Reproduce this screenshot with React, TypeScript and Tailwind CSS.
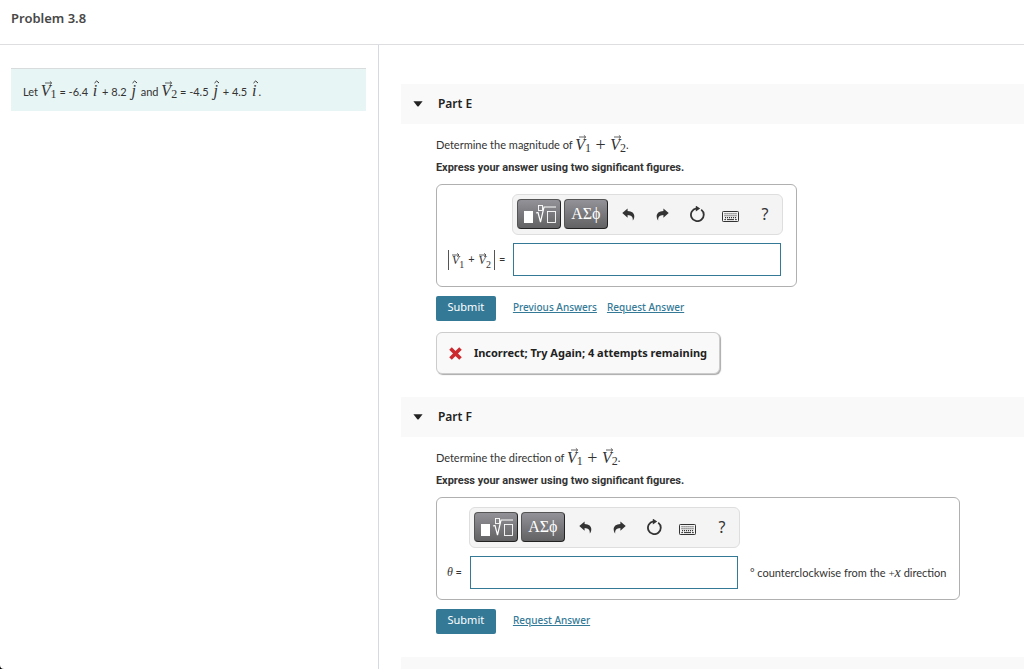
import React, { useState } from 'react';

type VecProps = {
  sub: string;
  small?: boolean;
};

// Italic V with an arrow over it and a subscript
function Vec({ sub, small = false }: VecProps) {
  return (
    <span className={`font-['Liberation_Serif',serif] leading-none ${small ? 'text-xs' : 'text-base'}`}>
      <span className="relative inline-block italic">
        V
        <svg
          className={`absolute h-1 overflow-visible ${small ? '-top-px left-0 w-full' : '-top-[2px] left-1 w-[7px]'}`}
          viewBox="0 0 10 4"
          preserveAspectRatio="none"
          fill="none"
          stroke="currentColor"
          strokeWidth="0.9"
        >
          <path d="M0 2H9.5M7 0.3L9.5 2L7 3.7" />
        </svg>
      </span>
      {small ? (
        <sub className="relative bottom-auto top-1 align-baseline text-[10px]">{sub}</sub>
      ) : (
        <sub className="relative bottom-auto top-[2px] align-baseline text-xs">{sub}</sub>
      )}
    </span>
  );
}

// Unit vector: italic letter with a hat
function Hat({ letter }: { letter: string }) {
  return (
    <span className="relative inline-block px-[2px] font-['Liberation_Serif',serif] text-base italic leading-none">
      {letter}
      <svg
        className="absolute left-[3px] top-0 h-[3px] w-[5px] overflow-visible"
        viewBox="0 0 5 3"
        fill="none"
        stroke="currentColor"
      >
        <path d="M0.5 0L2.7 -2L5 0" />
      </svg>
    </span>
  );
}

function UndoIcon() {
  return (
    <svg className="h-[13px] w-[13px]" viewBox="0 0 13 13" fill="currentColor">
      <path d="M0.3 5L5.6 0.4V3C9.8 3.2 12.6 5.2 12.3 8.8C12.2 10.3 11.7 11.4 10.8 12.6C11.1 9 9.6 7 5.6 6.9V9.7Z" />
    </svg>
  );
}

function RedoIcon() {
  return (
    <svg className="h-[13px] w-[13px]" viewBox="0 0 13 13" fill="currentColor">
      <path d="M12.7 5L7.4 0.4V3C3.2 3.2 0.4 5.2 0.7 8.8C0.8 10.3 1.3 11.4 2.2 12.6C1.9 9 3.4 7 7.4 6.9V9.7Z" />
    </svg>
  );
}

function ResetIcon() {
  return (
    <svg className="h-4 w-4" viewBox="0 0 16 16" fill="none">
      <path d="M12.2 3.6A6.4 6.4 0 1 1 7.4 2.4" stroke="currentColor" strokeWidth="1.8" />
      <path d="M6.8 -0.4L11.2 2.6L6.8 5.6Z" fill="currentColor" />
    </svg>
  );
}

function KeyboardIcon() {
  return (
    <svg className="mt-1 h-[11px] w-[17px]" viewBox="0 0 17 11" fill="none" stroke="currentColor">
      <rect x="0.5" y="0.5" width="16" height="10" rx="0.8" />
      <path d="M2.5 2.8H15M2.5 4.8H15M3 6.6H14.5" strokeDasharray="1.1 0.9" strokeWidth="1.1" />
      <path d="M2.3 8.6H4M5 8.6H12M13 8.6H14.8" />
    </svg>
  );
}

function RootIcon() {
  return (
    <svg className="h-[22px] w-[34px]" viewBox="0 0 34 22" fill="none" stroke="white">
      <rect x="2" y="8" width="9" height="12" fill="white" stroke="none" />
      <path d="M14 10L16 9.5L18.5 19L22 4H34" strokeWidth="1.2" />
      <rect x="16.5" y="2.5" width="4" height="5" strokeWidth="0.9" />
      <rect x="25.5" y="8.5" width="8" height="11" strokeWidth="0.9" />
    </svg>
  );
}

function Caret() {
  return (
    <svg className="h-[6px] w-[10px]" viewBox="0 0 10 6" fill="currentColor">
      <path d="M0.4 0.3H9.6L5.7 5.2Q5 6 4.3 5.2Z" />
    </svg>
  );
}

function Toolbar() {
  const dark =
    'flex h-[30px] w-11 items-center justify-center rounded border border-[#555] border-b-[#222] border-r-[#222] bg-linear-to-b from-[#929298] to-[#626264] text-white';
  const plain = 'flex h-[30px] flex-1 items-center justify-center';

  return (
    <div className="flex h-[41px] w-[271px] items-center rounded-md border border-[#dedede] bg-[#f4f4f4] pb-px pl-1 text-[#333]">
      <button type="button" aria-label="Templates" className={dark}>
        <RootIcon />
      </button>
      <button
        type="button"
        aria-label="Symbols"
        className={`${dark} ml-[3px] mr-1 pb-px font-['Liberation_Serif',serif] text-base`}
      >
        ΑΣϕ
      </button>
      <button type="button" aria-label="Undo" className={plain}>
        <UndoIcon />
      </button>
      <button type="button" aria-label="Redo" className={plain}>
        <RedoIcon />
      </button>
      <button type="button" aria-label="Reset" className={plain}>
        <ResetIcon />
      </button>
      <button type="button" aria-label="Keyboard shortcuts" className={plain}>
        <KeyboardIcon />
      </button>
      <button type="button" aria-label="Help" className={`${plain} font-['Noto_Sans',sans-serif] text-base`}>
        ?
      </button>
    </div>
  );
}

function PartHeader({ title }: { title: string }) {
  return (
    <h2 className="bg-[#f9f9f9] font-['Noto_Sans',sans-serif] text-xs font-semibold text-[#222]">
      <button type="button" className="flex h-10 w-full items-center gap-[15px] pl-3">
        <Caret />
        {title}
      </button>
    </h2>
  );
}

type AnswerProps = {
  id: string;
  label: React.ReactNode;
  labelClass: string;
  suffix?: React.ReactNode;
};

function AnswerBox({ id, label, labelClass, suffix }: AnswerProps) {
  const [value, setValue] = useState('');

  return (
    <div className="mt-[6px] grid w-fit grid-cols-[auto_auto_auto] gap-y-2 rounded-md border border-[#b0b0b0] pb-[10px] pl-[10px] pr-[13px] pt-[9px]">
      <div className="col-start-2">
        <Toolbar />
      </div>
      <label htmlFor={id} className={`col-start-1 flex items-center whitespace-nowrap ${labelClass}`}>
        {label}
      </label>
      <input
        id={id}
        type="text"
        value={value}
        onChange={(e) => setValue(e.target.value)}
        className="ml-px h-[33px] w-[268px] border border-[#347a97] bg-white px-2 text-sm outline-none"
      />
      {suffix && <div className="flex items-center pl-[10px]">{suffix}</div>}
    </div>
  );
}

function Actions({ links }: { links: string[] }) {
  return (
    <div className="mt-[9px] flex items-center">
      <button
        type="submit"
        className="mr-[17px] h-[25px] w-[60px] rounded-xs bg-[#347a97] pb-[2px] font-['Noto_Sans',sans-serif] text-[11px] text-white"
      >
        Submit
      </button>
      <div className="flex gap-[10px] pb-[2px] font-['Noto_Sans',sans-serif] text-[10px] font-medium text-[#347a97]">
        {links.map((link) => (
          <a key={link} href="#" className="underline underline-offset-1">
            {link}
          </a>
        ))}
      </div>
    </div>
  );
}

function Question({ kind }: { kind: string }) {
  return (
    <>
      <p className="flex h-[22px] items-center whitespace-pre">
        Determine the {kind} of <Vec sub="1" />
        <span className="font-['Liberation_Serif',serif] text-lg leading-none"> + </span>
        <Vec sub="2" />.
      </p>
      <p className="mt-[2px] font-['Roboto',sans-serif] leading-5 font-bold">
        Express your answer using two significant figures.
      </p>
    </>
  );
}

function App() {
  return (
    <div className="h-screen overflow-hidden bg-black">
      <div className="flex h-full flex-col rounded-bl bg-white font-['Lato','Noto_Sans',sans-serif] text-[11px] text-[#333]">
        <header className="h-[45px] shrink-0 border-b border-[#dedee0] px-[11px] pt-2">
          <h1 className="font-['Noto_Sans',sans-serif] text-[13px] leading-5 font-semibold text-[#484848]">
            Problem 3.8
          </h1>
        </header>

        <div className="flex min-h-0 flex-1">
          <aside className="w-[37%] shrink-0 border-r border-[#d2dae2] pl-[11px] pr-3 pt-[23px]">
            <p className="h-[43px] border-t border-[#d8dcdc] bg-[#e8f5f5] px-3 pt-[13px] leading-5">
              Let <Vec sub="1" /> = -6.4 <Hat letter="i" /> + 8.2 <Hat letter="j" /> and <Vec sub="2" /> = -4.5{' '}
              <Hat letter="j" /> + 4.5 <Hat letter="i" />.
            </p>
          </aside>

          <main className="min-w-0 flex-1 overflow-hidden pl-[22px] pt-[39px]">
            <section>
              <PartHeader title="Part E" />
              <form className="pl-[35px] pt-[10px]" onSubmit={(e) => e.preventDefault()}>
                <Question kind="magnitude" />
                <AnswerBox
                  id="part-e"
                  labelClass="w-[65px]"
                  label={
                    <span className="flex items-center gap-1 pl-px">
                      <span className="flex h-5 items-center gap-1 border-x border-[#555] px-[3px]">
                        <Vec sub="1" small />
                        <span>+</span>
                        <Vec sub="2" small />
                      </span>
                      =
                    </span>
                  }
                />
                <Actions links={['Previous Answers', 'Request Answer']} />
              </form>
              <div className="ml-[35px] mt-[11px] flex h-[42px] w-fit items-center gap-3 rounded-md border border-[#ccc] bg-[#f9f9f9] px-3 font-['Noto_Sans',sans-serif] font-bold text-[#222] shadow-[1px_1px_1px_#aaa]">
                <svg className="h-[13px] w-[13px]" viewBox="0 0 13 13" fill="none" stroke="#cc2a2f" strokeWidth="3.6">
                  <path d="M1.5 1.5L11.5 11.5M11.5 1.5L1.5 11.5" />
                </svg>
                Incorrect; Try Again; 4 attempts remaining
              </div>
            </section>

            <section className="mt-[23px]">
              <PartHeader title="Part F" />
              <form className="pl-[35px] pt-[10px]" onSubmit={(e) => e.preventDefault()}>
                <Question kind="direction" />
                <AnswerBox
                  id="part-f"
                  labelClass="w-[22px]"
                  label={
                    <span>
                      <i className="font-['Liberation_Serif',serif] text-xs">θ</i> =
                    </span>
                  }
                  suffix={
                    <span>
                      ° counterclockwise from the{' '}
                      <span className="font-['Liberation_Serif',serif]">
                        +<i className="text-sm">x</i>
                      </span>{' '}
                      direction
                    </span>
                  }
                />
                <Actions links={['Request Answer']} />
              </form>
            </section>

            <div className="mt-[23px] h-10 bg-[#f9f9f9]" />
          </main>
        </div>
      </div>
    </div>
  );
}

export default App;
